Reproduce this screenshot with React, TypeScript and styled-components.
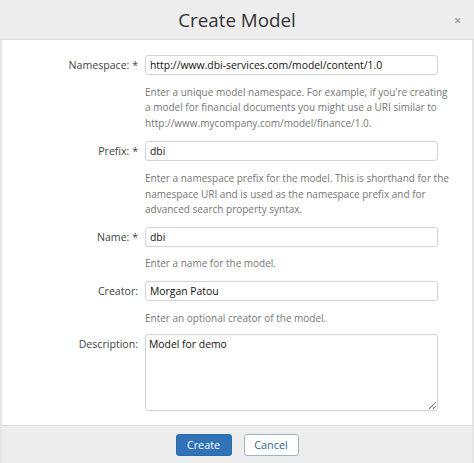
import React from "react";
import styled, { createGlobalStyle } from "styled-components";

const GlobalStyle = createGlobalStyle`
  html, body {
    margin: 0;
    padding: 0;
    background: #ffffff;
  }
  body {
    font-family: "Open Sans", "Liberation Sans", sans-serif;
  }
`;

const Dialog = styled.div`
  width: 474px;
  height: 463px;
  display: flex;
  flex-direction: column;
  box-sizing: border-box;
  background: #ffffff;
  overflow: hidden;
`;

const Header = styled.div`
  height: 40px;
  flex: none;
  position: relative;
  display: flex;
  align-items: center;
  justify-content: center;
  background: #ededed;
  border-bottom: 1px solid #dcdcdc;
  box-sizing: border-box;
`;

const Title = styled.h1`
  margin: 0;
  font-size: 18.8px;
  font-weight: 400;
  color: #333333;
`;

const Close = styled.span`
  position: absolute;
  right: 13px;
  top: 12px;
  font-size: 12px;
  color: #9a9a9a;
  font-weight: 600;
`;

const Body = styled.div`
  flex: 1;
  min-height: 0;
  overflow: hidden;
  border-left: 2px solid #e6e6e6;
  border-right: 2px solid #e6e6e6;
  padding: 15px 0 0 0;
  display: grid;
  grid-template-columns: 136px 293px;
  column-gap: 7px;
  align-content: start;
`;

const Label = styled.label`
  text-align: right;
  font-size: 10.6px;
  color: #444444;
  padding-top: 2px;
  line-height: 16px;
  white-space: nowrap;
`;

const Field = styled.div<{ $gap: number }>`
  display: flex;
  flex-direction: column;
  padding-bottom: ${(p) => p.$gap}px;
`;

const Input = styled.input`
  box-sizing: border-box;
  width: 293px;
  height: 20px;
  border: 1px solid #d4d4d4;
  border-radius: 3px;
  padding: 0 4px;
  font-family: "Open Sans", "Liberation Sans", sans-serif;
  font-size: 10.4px;
  color: #111111;
  background: #fff;
  outline: none;
`;

const Textarea = styled.textarea`
  box-sizing: border-box;
  width: 293px;
  height: 77px;
  border: 1px solid #d4d4d4;
  border-radius: 3px;
  padding: 2px 3px;
  font-family: "Open Sans", "Liberation Sans", sans-serif;
  font-size: 10.4px;
  color: #111111;
  resize: vertical;
  outline: none;
  display: block;
`;

const Help = styled.div`
  margin-top: 9.5px;
  font-size: 10px;
  line-height: 15.8px;
  color: #767676;
  white-space: nowrap;
`;

const Footer = styled.div`
  height: 38px;
  flex: none;
  background: #ededed;
  border-top: 1px solid #dcdcdc;
  border-left: 2px solid #e6e6e6;
  border-right: 2px solid #e6e6e6;
  display: flex;
  justify-content: center;
  align-items: center;
  gap: 12px;
  box-sizing: border-box;
`;

const Button = styled.button<{ $primary?: boolean }>`
  height: 22px;
  width: ${(p) => (p.$primary ? 56 : 55)}px;
  border-radius: 3px;
  font-family: "Open Sans", "Liberation Sans", sans-serif;
  font-size: 10.8px;
  padding: 0;
  cursor: pointer;
  background: ${(p) => (p.$primary ? "#2f72b8" : "#ffffff")};
  color: ${(p) => (p.$primary ? "#ffffff" : "#2f5f8f")};
  border: 1px solid ${(p) => (p.$primary ? "#2a68a8" : "#9fb4c9")};
`;

const rows = [
  {
    label: "Namespace: *",
    value: "http://www.dbi-services.com/model/content/1.0",
    help: [
      "Enter a unique model namespace. For example, if you're creating",
      "a model for financial documents you might use a URI similar to",
      "http://www.mycompany.com/model/finance/1.0.",
    ],
    gap: 9.5,
  },
  {
    label: "Prefix: *",
    value: "dbi",
    help: [
      "Enter a namespace prefix for the model. This is shorthand for the",
      "namespace URI and is used as the namespace prefix and for",
      "advanced search property syntax.",
    ],
    gap: 8.5,
  },
  {
    label: "Name: *",
    value: "dbi",
    help: ["Enter a name for the model."],
    gap: 9,
  },
  {
    label: "Creator:",
    value: "Morgan Patou",
    help: ["Enter an optional creator of the model."],
    gap: 8,
  },
];

export default function App() {
  return (
    <>
      <GlobalStyle />
      <Dialog>
        <Header>
          <Title>Create Model</Title>
          <Close>×</Close>
        </Header>
        <Body>
          {rows.map((r) => (
            <React.Fragment key={r.label}>
              <Label>{r.label}</Label>
              <Field $gap={r.gap}>
                <Input defaultValue={r.value} />
                <Help>
                  {r.help.map((line) => (
                    <div key={line}>{line}</div>
                  ))}
                </Help>
              </Field>
            </React.Fragment>
          ))}
          <Label>Description:</Label>
          <Field $gap={0}>
            <Textarea defaultValue="Model for demo" />
          </Field>
        </Body>
        <Footer>
          <Button $primary>Create</Button>
          <Button>Cancel</Button>
        </Footer>
      </Dialog>
    </>
  );
}
